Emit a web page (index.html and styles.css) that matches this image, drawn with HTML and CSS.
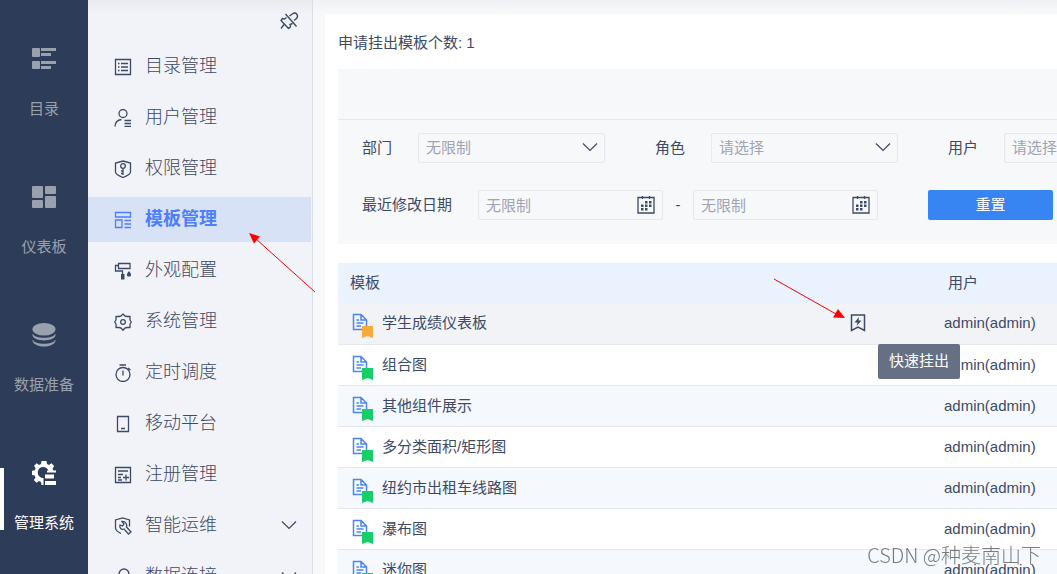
FILE: index.html
```html
<!DOCTYPE html>
<html lang="zh-CN">
<head>
  <meta charset="UTF-8">
  <meta name="viewport" content="width=device-width, initial-scale=1.0">
  <title>模板管理</title>
  <link rel="stylesheet" href="styles.css">
</head>
<body>
  <div class="app">
    <nav class="rail">
      <a class="rail-item" href="#">
        <svg width="26" height="26" viewBox="0 0 26 26" fill="currentColor"><rect x="1" y="2" width="8" height="9" rx="1"/><rect x="10" y="2" width="15" height="3"/><rect x="10" y="7" width="10" height="3"/><rect x="1" y="15" width="8" height="8" rx="1"/><rect x="10" y="15" width="15" height="3"/><rect x="10" y="20" width="10" height="3"/></svg>
        <span>目录</span>
      </a>
      <a class="rail-item" href="#">
        <svg width="26" height="26" viewBox="0 0 26 26" fill="currentColor"><rect x="1" y="2" width="11" height="12" rx="1"/><rect x="14" y="2" width="11" height="8" rx="1"/><rect x="1" y="16" width="11" height="8" rx="1"/><rect x="14" y="12" width="11" height="12" rx="1"/></svg>
        <span>仪表板</span>
      </a>
      <a class="rail-item" href="#">
        <svg width="26" height="26" viewBox="0 0 26 26" fill="currentColor"><ellipse cx="13" cy="7.300" rx="11.500" ry="6.300"/><path d="M1.500 11.500C4 17.300 22 17.300 24.500 11.500V13.500C22.500 20 3.500 20 1.500 13.500Z"/><path d="M1.500 17.500C4 23.300 22 23.300 24.500 17.500V19C22.500 26.300 3.500 26.300 1.500 19Z"/></svg>
        <span>数据准备</span>
      </a>
      <a class="rail-item active" href="#">
        <svg width="26" height="26" viewBox="0 0 26 26" fill="currentColor"><path d="M10 4L10.500 1H15.500L16 4L18 5L20.500 3.200L23.200 6L21.500 8.500L22.500 11H17.500A5.500 5.500 0 1 0 12.500 18V25H10.500L10 22L8 21L5.500 22.800L2.800 20L4.500 17.500L3.700 15.500L1 15V10.800L3.800 10.200L4.600 8.200L3 5.800L5.700 3.200L8 4.900Z"/><rect x="16" y="10.500" width="9" height="2"/><rect x="14" y="14.500" width="9" height="4"/><rect x="14" y="21" width="11" height="4"/></svg>
        <span>管理系统</span>
      </a>
    </nav>

    <aside class="sidebar">
      <button class="pin" aria-label="取消固定">
        <svg width="20" height="20" viewBox="0 0 20 20" fill="none" stroke="currentColor" stroke-width="1.400"><path d="M6.500 3L17.500 15.500M10.500 5L14 2.500C17 1 19.500 4 18 7L15 9.500M7.500 6.500L5.500 8L3.500 7.500L2 9.500L9.500 17.500L11.500 16L11 13.500L13.500 12.500M5 13.500L2 17.500"/></svg>
      </button>
      <ul class="menu">
        <li><a class="menu-item" href="#">
          <svg class="icon" viewBox="0 0 18 18"><path d="M1.500 1.500H16.500V16.500H1.500ZM4 5.500H5.500M7 5.500H14M4 9H5.500M7 9H14M4 12.500H5.500M7 12.500H14"/></svg>
          <span>目录管理</span>
        </a></li>
        <li><a class="menu-item" href="#">
          <svg class="icon" viewBox="0 0 18 18"><circle cx="9" cy="4.500" r="4"/><path d="M1 17.500C1 13 4 11 7.500 10.500M10.500 11.500H17M10.500 14.500H17M10.500 17.300H17"/></svg>
          <span>用户管理</span>
        </a></li>
        <li><a class="menu-item" href="#">
          <svg class="icon" viewBox="0 0 18 18"><path d="M9 1L16.500 3V12C16.500 14 13 16 9 17.500C5 16 1.500 14 1.500 12V3Z"/><circle cx="9" cy="6" r="2.300"/><path d="M9 8.500V15M9 11H7M9 13.500H7"/></svg>
          <span>权限管理</span>
        </a></li>
        <li><a class="menu-item active" href="#">
          <svg class="icon" viewBox="0 0 18 18"><path d="M1.500 1.500H16.500V6H1.500ZM1.500 9H8V16.500H1.500ZM10.500 9.500H17M10.500 13H17M10.500 16.500H17"/></svg>
          <span>模板管理</span>
        </a></li>
        <li><a class="menu-item" href="#">
          <svg class="icon" viewBox="0 0 18 18"><path d="M4.500 1.500H16V6.500H4.500ZM4.500 3.500H1.500V9H8.500V12"/><path class="solid" d="M7 12H10.500V17.500H7ZM15 9C18 12.500 17.500 14.500 15 14.500C12.500 14.500 12 12.500 15 9Z"/></svg>
          <span>外观配置</span>
        </a></li>
        <li><a class="menu-item" href="#">
          <svg class="icon" viewBox="0 0 18 18"><path d="M7 3L9 1L11 3L13 3.500L16 3.500L16 7L17.300 9L16 11L16 14.500L13 14.500L11 15L9 17.300L7 15L5 14.500L2 14.500L2 11L.7 9L2 7L2 3.500L5 3.500Z" stroke-linejoin="round"/><circle cx="9" cy="9" r="2.300"/></svg>
          <span>系统管理</span>
        </a></li>
        <li><a class="menu-item" href="#">
          <svg class="icon" viewBox="0 0 18 18"><circle cx="9" cy="10.500" r="7"/><path d="M5.500 1H12M9 6.500V11.500M14 4L16.500 6"/></svg>
          <span>定时调度</span>
        </a></li>
        <li><a class="menu-item" href="#">
          <svg class="icon" viewBox="0 0 18 18"><path d="M3.500 1.500H14.500V16.500H3.500ZM7 13.500H11"/></svg>
          <span>移动平台</span>
        </a></li>
        <li><a class="menu-item" href="#">
          <svg class="icon" viewBox="0 0 18 18"><path d="M1.500 1.500H16.500V16.500H1.500ZM4 5H14M4 8.500H9M4 11.500H7M4 14H8M9 11.500H15M12 8.500V14.500"/></svg>
          <span>注册管理</span>
        </a></li>
        <li><a class="menu-item" href="#">
          <svg class="icon" viewBox="0 0 18 18"><path d="M7 16.500C4 15 1.500 13 1.500 11V3L8.500 1L15.500 3V9.500M8 4.500L10 7L8.500 9L6 8C5 11 7.500 13 10 12L14.500 17L17 15L12.500 10C13.500 7 11 4 8 4.500Z"/></svg>
          <span>智能运维</span>
          <svg class="chevron" viewBox="0 0 16 10"><path d="M1 1.500L8 8.500L15 1.500"/></svg>
        </a></li>
        <li><a class="menu-item" href="#">
          <svg class="icon" viewBox="0 0 18 18"><circle cx="10" cy="6" r="5"/><path d="M6 10L2 16"/></svg>
          <span>数据连接</span>
          <svg class="chevron" viewBox="0 0 16 10"><path d="M1 1.500L8 8.500L15 1.500"/></svg>
        </a></li>
      </ul>
    </aside>

    <main class="main">
      <section class="panel">
        <p class="count">申请挂出模板个数: 1</p>

        <form class="filter">
          <div class="filter-head"></div>
          <div class="filter-row">
            <div class="field">
              <label for="dept">部门</label>
              <div class="control">
                <select id="dept"><option>无限制</option></select>
                <svg class="chevron" viewBox="0 0 16 10"><path d="M1 1.500L8 8.500L15 1.500"/></svg>
              </div>
            </div>
            <div class="field">
              <label for="role">角色</label>
              <div class="control">
                <select id="role"><option>请选择</option></select>
                <svg class="chevron" viewBox="0 0 16 10"><path d="M1 1.500L8 8.500L15 1.500"/></svg>
              </div>
            </div>
            <div class="field">
              <label for="user">用户</label>
              <div class="control">
                <select id="user"><option>请选择</option></select>
                <svg class="chevron" viewBox="0 0 16 10"><path d="M1 1.500L8 8.500L15 1.500"/></svg>
              </div>
            </div>
          </div>
          <div class="filter-row">
            <label class="date-label" for="from">最近修改日期</label>
            <div class="control date">
              <input id="from" type="text" placeholder="无限制">
              <svg class="calendar" viewBox="0 0 18 18"><path d="M1 1.500H17V17H1ZM5.500 0V3M12.500 0V3"/><path class="solid" d="M8 5H10.500V7.500H8ZM12 5H14.500V7.500H12ZM4 8.500H6.500V11H4ZM8 8.500H10.500V11H8ZM12 8.500H14.500V11H12ZM4 12H6.500V14.500H4ZM8 12H10.500V14.500H8Z"/></svg>
            </div>
            <span class="dash">-</span>
            <div class="control date">
              <input id="to" type="text" placeholder="无限制" aria-label="结束日期">
              <svg class="calendar" viewBox="0 0 18 18"><path d="M1 1.500H17V17H1ZM5.500 0V3M12.500 0V3"/><path class="solid" d="M8 5H10.500V7.500H8ZM12 5H14.500V7.500H12ZM4 8.500H6.500V11H4ZM8 8.500H10.500V11H8ZM12 8.500H14.500V11H12ZM4 12H6.500V14.500H4ZM8 12H10.500V14.500H8Z"/></svg>
            </div>
            <button class="reset" type="reset">重置</button>
          </div>
        </form>

        <table class="list">
          <thead>
            <tr><th class="col-name">模板</th><th>用户</th></tr>
          </thead>
          <tbody>
            <tr class="hover">
              <td>
                <div class="name">
                  <svg class="doc pending" viewBox="0 0 22 26"><path class="page" d="M1.500 1.500H9L14.500 7V16.500H1.500ZM9 1.500V7H14.500M4.500 7H7M4.500 10H11.500M4.500 13H9"/><path class="flag" d="M10 13H21V25L15.500 23L10 25Z"/></svg>
                  <span>学生成绩仪表板</span>
                  <button class="quick" type="button" aria-label="快速挂出">
                    <svg width="16" height="18" viewBox="0 0 16 18"><path d="M1.500 1H14.500V16.500L8 13L1.500 16.500Z" fill="none" stroke="currentColor" stroke-width="1.500"/><path d="M9 3L4.500 8.500H7.500L6.500 12L11.500 6.500H8.500Z" fill="currentColor"/></svg>
                    <span class="tooltip">快速挂出</span>
                  </button>
                </div>
              </td>
              <td>admin(admin)</td>
            </tr>
            <tr>
              <td><div class="name"><svg class="doc" viewBox="0 0 22 26"><path class="page" d="M1.500 1.500H9L14.500 7V16.500H1.500ZM9 1.500V7H14.500M4.500 7H7M4.500 10H11.500M4.500 13H9"/><path class="flag" d="M10 13H21V25L15.500 23L10 25Z"/></svg><span>组合图</span></div></td>
              <td>admin(admin)</td>
            </tr>
            <tr>
              <td><div class="name"><svg class="doc" viewBox="0 0 22 26"><path class="page" d="M1.500 1.500H9L14.500 7V16.500H1.500ZM9 1.500V7H14.500M4.500 7H7M4.500 10H11.500M4.500 13H9"/><path class="flag" d="M10 13H21V25L15.500 23L10 25Z"/></svg><span>其他组件展示</span></div></td>
              <td>admin(admin)</td>
            </tr>
            <tr>
              <td><div class="name"><svg class="doc" viewBox="0 0 22 26"><path class="page" d="M1.500 1.500H9L14.500 7V16.500H1.500ZM9 1.500V7H14.500M4.500 7H7M4.500 10H11.500M4.500 13H9"/><path class="flag" d="M10 13H21V25L15.500 23L10 25Z"/></svg><span>多分类面积/矩形图</span></div></td>
              <td>admin(admin)</td>
            </tr>
            <tr>
              <td><div class="name"><svg class="doc" viewBox="0 0 22 26"><path class="page" d="M1.500 1.500H9L14.500 7V16.500H1.500ZM9 1.500V7H14.500M4.500 7H7M4.500 10H11.500M4.500 13H9"/><path class="flag" d="M10 13H21V25L15.500 23L10 25Z"/></svg><span>纽约市出租车线路图</span></div></td>
              <td>admin(admin)</td>
            </tr>
            <tr>
              <td><div class="name"><svg class="doc" viewBox="0 0 22 26"><path class="page" d="M1.500 1.500H9L14.500 7V16.500H1.500ZM9 1.500V7H14.500M4.500 7H7M4.500 10H11.500M4.500 13H9"/><path class="flag" d="M10 13H21V25L15.500 23L10 25Z"/></svg><span>瀑布图</span></div></td>
              <td>admin(admin)</td>
            </tr>
            <tr>
              <td><div class="name"><svg class="doc" viewBox="0 0 22 26"><path class="page" d="M1.500 1.500H9L14.500 7V16.500H1.500ZM9 1.500V7H14.500M4.500 7H7M4.500 10H11.500M4.500 13H9"/><path class="flag" d="M10 13H21V25L15.500 23L10 25Z"/></svg><span>迷你图</span></div></td>
              <td>admin(admin)</td>
            </tr>
          </tbody>
        </table>
      </section>
    </main>
  </div>

  <svg class="arrow arrow-menu" width="68" height="61" viewBox="0 0 68 61"><path d="M67 60L8 7" stroke="#f00"/><path d="M1 1L12 4.500L6 11.500Z" fill="#f00"/></svg>
  <svg class="arrow arrow-quick" width="72" height="42" viewBox="0 0 72 42"><path d="M1 1L63 36" stroke="#f00"/><path d="M72 40L60 39.500L65 31Z" fill="#f00"/></svg>
  <div class="watermark">CSDN @种麦南山下</div>
</body>
</html>
```

FILE: styles.css
```css
* {
  box-sizing: border-box;
}

body {
  margin: 0;
  font-family: "Liberation Sans", "Noto Sans CJK SC", sans-serif;
  font-size: 15px;
  line-height: 20px;
  color: #3d4a66;
  overflow: hidden;
}

button,
input,
select {
  font: inherit;
  color: inherit;
}

a {
  color: inherit;
  text-decoration: none;
}

.app {
  display: flex;
  height: 100vh;
}

/* left rail */
.rail {
  flex: none;
  width: 88px;
  padding-top: 46px;
  background: #2d3d59;
  color: #9aa1ae;
}

.rail-item {
  display: flex;
  flex-direction: column;
  align-items: center;
  gap: 27px;
  height: 138px;
}

.rail-item.active {
  position: relative;
  color: #fff;
}

.rail-item.active::before {
  content: "";
  position: absolute;
  left: 0;
  top: 8px;
  width: 4px;
  height: 62px;
  background: #fff;
}

/* menu */
.sidebar {
  flex: none;
  width: 225px;
  padding-top: 11px;
  display: flex;
  flex-direction: column;
  background: linear-gradient(#e9eaee, #f2f3f8 14px);
  border-right: 1px solid #dcdee6;
}

.pin {
  align-self: flex-end;
  width: 20px;
  height: 20px;
  margin-right: 13px;
  padding: 0;
  border: none;
  background: none;
  cursor: pointer;
}

.pin svg {
  display: block;
}

.menu {
  list-style: none;
  margin: 0;
  padding: 13px 1px 0 0;
  display: flex;
  flex-direction: column;
  gap: 6px;
}

.menu-item {
  display: flex;
  align-items: center;
  gap: 13px;
  height: 45px;
  padding: 0 14px 2px 26px;
  font-size: 18px;
  font-weight: 300;
}

.menu-item.active {
  background: #d8e2f6;
  color: #4d7eff;
  font-weight: 700;
}

.icon {
  flex: none;
  width: 18px;
  height: 18px;
  margin-top: 2px;
  fill: none;
  stroke: currentColor;
  stroke-width: 1.3;
}

.solid {
  fill: currentColor;
  stroke: none;
}

.chevron {
  width: 16px;
  height: 10px;
  fill: none;
  stroke: currentColor;
  stroke-width: 1.2;
}

.menu-item .chevron {
  margin-left: auto;
}

/* content */
.main {
  flex: 1;
  min-width: 0;
  padding: 14px 0 0 12px;
  background: linear-gradient(#f0f1f4, #f7f8fa 14px);
  overflow: hidden;
}

.panel {
  min-height: 100%;
  padding: 19px 0 0 13px;
  background: #fff;
}

.count {
  margin: 0 0 16px;
}

.filter {
  padding-bottom: 24px;
  background: #f7f8fa;
  overflow: hidden;
}

.filter-head {
  height: 51px;
  margin-bottom: 13px;
  border-bottom: 1px solid #e6e8ec;
}

.filter-row {
  display: flex;
  align-items: center;
  padding-left: 24px;
}

.filter-row + .filter-row {
  margin-top: 27px;
}

.field {
  flex: none;
  display: flex;
  align-items: center;
  margin-right: 50px;
}

.field label {
  width: 56px;
}

.date-label {
  flex: none;
  width: 116px;
}

.control {
  position: relative;
  flex: none;
  width: 187px;
}

.control.date {
  width: 185px;
}

.control select,
.control input {
  display: block;
  width: 100%;
  height: 30px;
  padding: 0 7px;
  border: 1px solid #e6e8ec;
  border-radius: 2px;
  background: #f7f8fa;
  color: #9ea4b3;
  appearance: none;
  outline: none;
}

.control input::placeholder {
  color: #9ea4b3;
}

.control .chevron {
  position: absolute;
  right: 7px;
  top: 9px;
  pointer-events: none;
}

.calendar {
  position: absolute;
  right: 8px;
  top: 6px;
  width: 18px;
  height: 18px;
  fill: none;
  stroke: currentColor;
  stroke-width: 1.3;
}

.dash {
  flex: none;
  width: 30px;
  text-align: center;
}

.reset {
  flex: none;
  width: 125px;
  height: 30px;
  margin-left: 50px;
  padding: 0;
  border: none;
  border-radius: 2px;
  background: #3685f2;
  color: #fff;
  cursor: pointer;
}

/* template list */
.list {
  width: 100%;
  margin-top: 19px;
  border-collapse: collapse;
  table-layout: fixed;
}

.list th {
  height: 40px;
  padding: 0 12px;
  background: #eaf2fd;
  font-weight: 400;
  text-align: left;
}

.list .col-name {
  width: 598px;
}

.list td {
  height: 41px;
  padding: 0 8px;
  border-bottom: 1px solid #e6e8ec;
}

.list tbody tr:nth-child(odd) {
  background: #f5f8fd;
}

.list tbody tr.hover {
  background: #f2f3f7;
}

.name {
  display: flex;
  align-items: center;
  padding-left: 6px;
}

.doc {
  flex: none;
  width: 22px;
  height: 26px;
  margin: 6px 8px 0 0;
}

.page {
  fill: none;
  stroke: #4a86f0;
  stroke-width: 1.5;
}

.flag {
  fill: #17cf68;
}

.doc.pending .flag {
  fill: #faa93b;
}

.quick {
  position: relative;
  width: 16px;
  height: 18px;
  margin: 0 62px 0 auto;
  padding: 0;
  border: none;
  background: none;
  cursor: pointer;
}

.quick svg {
  display: block;
}

.tooltip {
  position: absolute;
  left: 28px;
  top: 30px;
  padding: 7px 11px 8px;
  border-radius: 2px;
  background: #657085;
  color: #fff;
  white-space: nowrap;
}

/* annotations */
.arrow {
  position: absolute;
  fill: none;
  pointer-events: none;
}

.arrow-menu {
  left: 248px;
  top: 232px;
}

.arrow-quick {
  left: 773px;
  top: 278px;
}

.watermark {
  position: fixed;
  right: 16px;
  bottom: 6px;
  font-family: "Noto Sans CJK SC", sans-serif;
  font-size: 20px;
  font-weight: 300;
  line-height: 26px;
  color: rgba(80, 80, 80, 0.75);
  pointer-events: none;
}
```
